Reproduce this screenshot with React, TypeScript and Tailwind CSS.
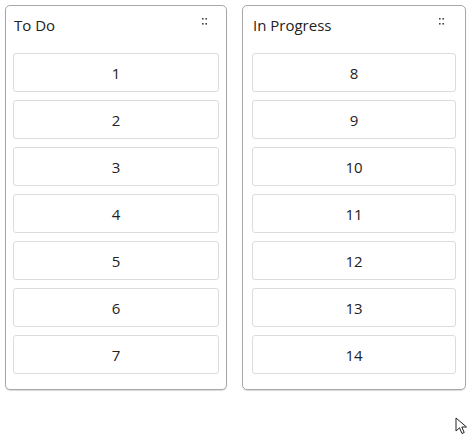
import React from "react";

const columns = [
  { title: "To Do", box: "w-[222px] px-[7px]", items: ["1", "2", "3", "4", "5", "6", "7"] },
  { title: "In Progress", box: "w-[224px] px-[9px]", items: ["8", "9", "10", "11", "12", "13", "14"] },
];

function Handle() {
  return (
    <svg width="5" height="7" viewBox="0 0 5 7" className="mt-[12px] mr-[12px]">
      <rect x="0" y="0" width="1.6" height="1.6" fill="#444" />
      <rect x="3.4" y="0" width="1.6" height="1.6" fill="#444" />
      <rect x="0" y="5" width="1.6" height="1.6" fill="#444" />
      <rect x="3.4" y="5" width="1.6" height="1.6" fill="#444" />
    </svg>
  );
}

export default function App() {
  return (
    <div className="relative w-[474px] h-[442px] bg-white font-['Open_Sans','Noto_Sans',sans-serif] text-[#222]">
      <div className="flex gap-[15px] pl-[5px] pt-[5px]">
        {columns.map((col) => (
          <div
            key={col.title}
            className={`${col.box} border border-[#a8a8a8] rounded-[5px] shadow-[0_1px_1px_rgba(0,0,0,0.15)] pb-[15px]`}
          >
            <div className="flex justify-between h-[47px]">
              <span className="text-[15px] pt-[8px] pl-[1px]">{col.title}</span>
              <Handle />
            </div>
            <div className="flex flex-col gap-[8px]">
              {col.items.map((item) => (
                <div
                  key={item}
                  className="h-[39px] flex items-center justify-center pt-[2px] border border-[#dcdcdc] rounded-[3px] bg-white text-[15px]"
                >
                  {item}
                </div>
              ))}
            </div>
          </div>
        ))}
      </div>
      {/* mouse pointer */}
      <svg
        width="14"
        height="18"
        viewBox="0 0 14 18"
        className="absolute left-[455px] top-[417px]"
      >
        <path
          d="M1 1 L1 14 L4.5 10.8 L7 16.5 L9.2 15.5 L6.8 10 L11.5 10 Z"
          fill="white"
          stroke="#222"
          strokeWidth="1"
          strokeLinejoin="round"
        />
      </svg>
    </div>
  );
}
